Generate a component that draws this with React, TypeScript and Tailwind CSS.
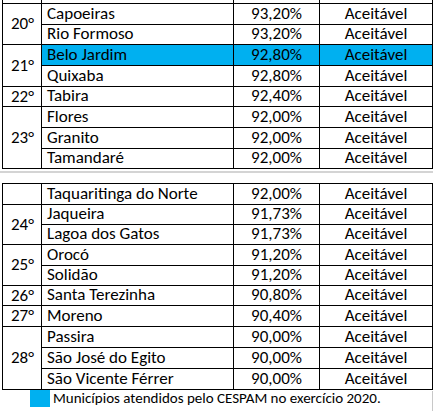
import React from "react";

type Row = { name: string; pct: string; h: number; hl?: boolean; rank?: string; span?: number };

const table1: Row[] = [
  { name: "Capoeiras", pct: "93,20%", h: 21, rank: "20°", span: 2 },
  { name: "Rio Formoso", pct: "93,20%", h: 20 },
  { name: "Belo Jardim", pct: "92,80%", h: 21, hl: true, rank: "21°", span: 2 },
  { name: "Quixaba", pct: "92,80%", h: 21 },
  { name: "Tabira", pct: "92,40%", h: 20, rank: "22°", span: 1 },
  { name: "Flores", pct: "92,00%", h: 21, rank: "23°", span: 3 },
  { name: "Granito", pct: "92,00%", h: 21 },
  { name: "Tamandaré", pct: "92,00%", h: 20 },
];

const table2: Row[] = [
  { name: "Taquaritinga do Norte", pct: "92,00%", h: 21, rank: "", span: 1 },
  { name: "Jaqueira", pct: "91,73%", h: 20, rank: "24°", span: 2 },
  { name: "Lagoa dos Gatos", pct: "91,73%", h: 20 },
  { name: "Orocó", pct: "91,20%", h: 21, rank: "25°", span: 2 },
  { name: "Solidão", pct: "91,20%", h: 20 },
  { name: "Santa Terezinha", pct: "90,80%", h: 20, rank: "26°", span: 1 },
  { name: "Moreno", pct: "90,40%", h: 21, rank: "27°", span: 1 },
  { name: "Passira", pct: "90,00%", h: 21, rank: "28°", span: 3 },
  { name: "São José do Egito", pct: "90,00%", h: 21 },
  { name: "São Vicente Férrer", pct: "90,00%", h: 21 },
];

function Cols() {
  return (
    <colgroup>
      <col className="w-[39px]" />
      <col className="w-[192px]" />
      <col className="w-[86px]" />
      <col className="w-[113px]" />
    </colgroup>
  );
}

function Body({ rows }: { rows: Row[] }) {
  return (
    <tbody>
      {rows.map((r, i) => (
        <tr key={i} style={{ height: r.h }}>
          {r.rank !== undefined && (
            <td
              rowSpan={r.span}
              className="border border-black p-0 pl-[1px] text-center align-middle leading-none bg-white"
            >
              {r.rank}
            </td>
          )}
          <td
            className={`border border-black p-0 pl-[5px] pb-[2px] align-bottom leading-none text-left whitespace-nowrap ${
              r.hl ? "bg-[#00b0f0]" : "bg-white"
            }`}
          >
            {r.name}
          </td>
          <td
            className={`border border-black p-0 pb-[2px] align-bottom leading-none text-center ${
              r.hl ? "bg-[#00b0f0]" : "bg-white"
            }`}
          >
            {r.pct}
          </td>
          <td
            className={`border border-black p-0 pb-[2px] align-bottom leading-none text-center ${
              r.hl ? "bg-[#00b0f0]" : "bg-white"
            }`}
          >
            Aceitável
          </td>
        </tr>
      ))}
    </tbody>
  );
}

export default function App() {
  return (
    <div
      className="w-[433px] h-[411px] overflow-hidden bg-white text-black relative text-[17px]"
      style={{ fontFamily: "Carlito, Lato, 'Noto Sans', sans-serif" }}
    >
      <div className="ml-[2px] -mt-[18px]">
        <table className="border-collapse table-fixed w-[430px]">
          <Cols />
          <tbody>
            <tr className="h-[21px]">
              <td className="border-x border-black p-0" />
              <td className="border-x border-black p-0" />
              <td className="border-x border-black p-0" />
              <td className="border-x border-black p-0" />
            </tr>
          </tbody>
          <Body rows={table1} />
        </table>
      </div>
      <div className="h-[14px] pt-[2px]">
        <div className="w-full h-[2px] bg-[#d4d4d4]" />
      </div>
      <div className="ml-[2px]">
        <table className="border-collapse table-fixed w-[430px]">
          <Cols />
          <Body rows={table2} />
        </table>
      </div>
      <div className="flex items-center pl-[30px] h-[18px]">
        <div className="w-[20px] h-[17px] bg-[#00b0f0]" />
        <span className="ml-[3px] text-[15px] leading-none">
          Municípios atendidos pelo CESPAM no exercício 2020.
        </span>
      </div>
      <div className="absolute right-0 bottom-0 w-px h-[20px] bg-[#c8c8c8]" />
    </div>
  );
}
